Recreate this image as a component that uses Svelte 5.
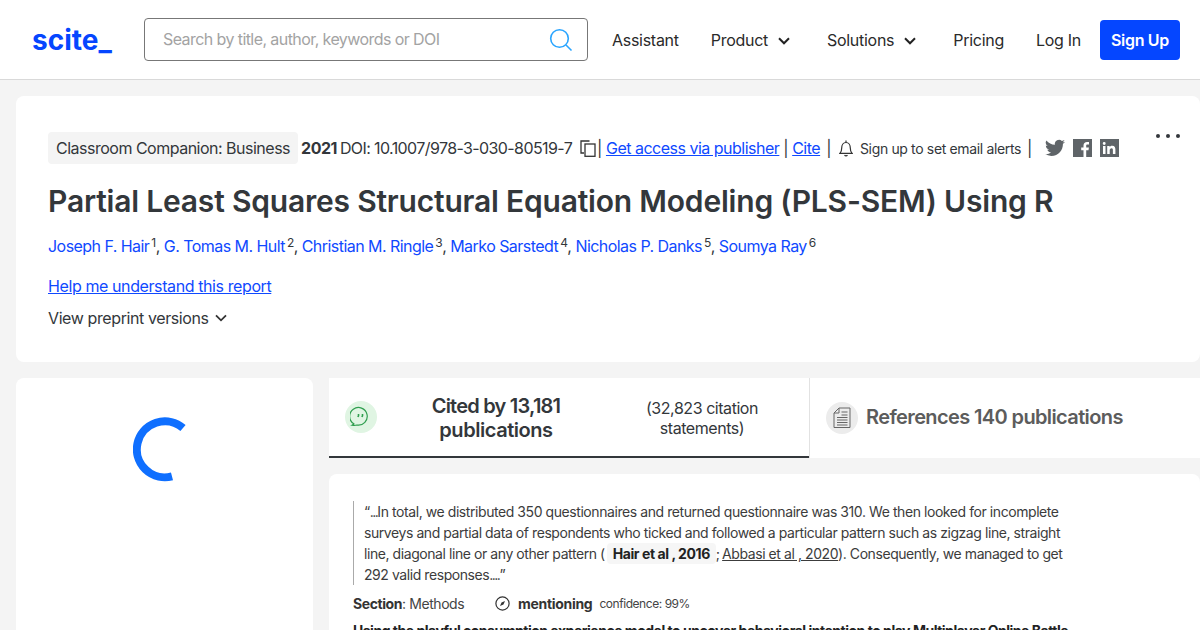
<script>
  const authors = [
    { name: 'Joseph F. Hair', n: 1 },
    { name: 'G. Tomas M. Hult', n: 2 },
    { name: 'Christian M. Ringle', n: 3 },
    { name: 'Marko Sarstedt', n: 4 },
    { name: 'Nicholas P. Danks', n: 5 },
    { name: 'Soumya Ray', n: 6 }
  ];
</script>

<header class="topbar">
  <div class="logo">scite_</div>
  <div class="search">
    <span class="placeholder">Search by title, author, keywords or DOI</span>
    <svg width="24" height="24" viewBox="0 0 24 24" fill="none" stroke="#2aa5ff" stroke-width="1.6">
      <circle cx="10.5" cy="10.5" r="8.8" />
      <path d="M17 17l5.5 5.5" />
    </svg>
  </div>
  <nav>
    <span>Assistant</span>
    <span class="drop">Product
      <svg width="12" height="8" viewBox="0 0 12 8" fill="none" stroke="#222" stroke-width="2"><path d="M1 1.3l5 5 5-5" /></svg>
    </span>
    <span class="drop">Solutions
      <svg width="12" height="8" viewBox="0 0 12 8" fill="none" stroke="#222" stroke-width="2"><path d="M1 1.3l5 5 5-5" /></svg>
    </span>
    <span>Pricing</span>
    <span>Log In</span>
    <button class="signup">Sign Up</button>
  </nav>
</header>

<main>
  <section class="card report">
    <div class="dots"><i></i><i></i><i></i></div>
    <div class="meta">
      <span class="chip">Classroom Companion: Business</span>
      <b class="year">2021</b>
      <span class="doi">DOI: 10.1007/978-3-030-80519-7</span>
      <svg class="copy" width="16" height="17" viewBox="0 0 16 17" fill="none" stroke="#333" stroke-width="1.3">
        <path d="M9.5 1H1v12h3" />
        <rect x="5" y="4" width="10" height="12.3" />
      </svg>
      <span class="sep first">|</span>
      <a href="#top">Get access via publisher</a>
      <span class="sep">|</span>
      <a href="#top">Cite</a>
      <span class="sep wide">|</span>
      <svg class="bell" width="14" height="17" viewBox="0 0 14 17" fill="none" stroke="#333" stroke-width="1.2">
        <path d="M1 13.3c1.4-1.3 1.7-2.6 1.7-5.3 0-3 1.7-5.5 4.3-5.5s4.3 2.5 4.3 5.5c0 2.7.3 4 1.7 5.3z" />
        <path d="M5.5 15.2c.8.9 2.2.9 3 0M7 .6v1.8" />
      </svg>
      <span class="alerts">Sign up to set email alerts</span>
      <span class="sep wide2">|</span>
      <svg class="social" width="20" height="18" viewBox="0 0 24 20" fill="#5f6468">
        <path d="M24 2.4a9.8 9.8 0 0 1-2.8.8 4.9 4.9 0 0 0 2.2-2.7 9.8 9.8 0 0 1-3.1 1.2A4.9 4.9 0 0 0 11.9 6.1 14 14 0 0 1 1.7.9a4.9 4.9 0 0 0 1.5 6.6 4.9 4.9 0 0 1-2.2-.6c0 2.4 1.7 4.4 3.9 4.9a4.9 4.9 0 0 1-2.2.1 4.9 4.9 0 0 0 4.6 3.4A9.9 9.9 0 0 1 0 17.3 14 14 0 0 0 7.5 19.5c9.1 0 14.3-7.7 14-14.6A10 10 0 0 0 24 2.4z" />
      </svg>
      <svg class="social" width="19" height="18" viewBox="0 0 19 18">
        <rect width="19" height="18" fill="#5f6468" />
        <path fill="#fff" d="M13.2 18v-6.8h2.3l.4-2.7h-2.7V6.8c0-.8.3-1.3 1.4-1.3H16V3.1c-.3 0-1.1-.1-2-.1-2.1 0-3.5 1.3-3.5 3.5v2H8.2v2.7h2.3V18z" />
      </svg>
      <svg class="social" width="19" height="18" viewBox="0 0 19 18">
        <rect width="19" height="18" fill="#5f6468" />
        <path fill="#fff" d="M3 7h2.5v8H3zM4.2 3a1.4 1.4 0 1 1 0 2.9 1.4 1.4 0 0 1 0-2.9zM7.2 7h2.4v1.1c.4-.7 1.3-1.3 2.6-1.3 2.7 0 3.2 1.7 3.2 4V15h-2.5v-3.700c0-.9 0-2.100-1.300-2.100s-1.900 1-1.900 2.100V15H7.200z" />
      </svg>
    </div>
    <h1>Partial Least Squares Structural Equation Modeling (PLS-SEM) Using R</h1>
    <div class="authors">
      {#each authors as a, i}
        <a href="#top" class="plain">{a.name}</a><sup>{a.n}</sup>{#if i < authors.length - 1}<span class="comma">,</span>{/if}
      {/each}
    </div>
    <a class="help" href="#top">Help me understand this report</a>
    <div class="preprint">View preprint versions
      <svg width="12" height="8" viewBox="0 0 12 8" fill="none" stroke="#333" stroke-width="1.8"><path d="M1 1.3l5 5 5-5" /></svg>
    </div>
  </section>

  <div class="columns">
    <aside class="card sidebar">
      <svg width="64" height="66" viewBox="0 0 64 66" fill="none" stroke="#0f6fff" stroke-width="8">
        <path d="M50 11A28 28 0 1 0 39 59.4" />
      </svg>
    </aside>

    <div class="results">
      <div class="tabs">
        <div class="tab active">
          <span class="circle green">
            <svg width="22" height="22" viewBox="0 0 22 22" fill="none" stroke="#2f9e4f" stroke-width="1.2">
              <path d="M3.8 17.8A8.8 8.8 0 1 1 7 19c-1.3.4-3 .5-5 .2.8-.4 1.4-.8 1.8-1.4z" />
              <path stroke-width="1.6" d="M8.5 8v1.8l-.6 1.2M12.5 8v1.8l-.6 1.2" />
            </svg>
          </span>
          <div class="count">Cited by 13,181<br /><span class="pubs">publications</span></div>
          <div class="statements">(32,823 citation<br />statements)</div>
        </div>
        <div class="tab refs">
          <span class="circle grey">
            <svg width="18" height="22" viewBox="0 0 18 22" fill="none" stroke="#666" stroke-width="1">
              <path d="M6 1h11v19.5H1V6z" />
              <path d="M6 1v5H1" />
              <path d="M8.5 5h6M8.5 8h6M4 10.5h10.5M4 13h10.5M4 15.5h10.5M4 18h10.5" />
            </svg>
          </span>
          <span class="refs-label">References 140 publications</span>
        </div>
      </div>

      <article class="card statement">
        <blockquote>
          “<span class="tight">...</span>In total, we distributed 350 questionnaires and returned questionnaire was 310. We then looked for incomplete<br />
          surveys and partial data of respondents who ticked and followed a particular pattern such as zigzag line, straight<br />
          line, diagonal line or any other pattern (<span class="cite">Hair et al , 2016</span>; <u>Abbasi et al , 2020</u>). Consequently, we managed to get<br />
          292 valid responses<span class="tight">....</span>”
        </blockquote>
        <div class="tally">
          <span class="section"><b>Section</b>: Methods</span>
          <svg width="15" height="15" viewBox="0 0 15 15" fill="none" stroke="#333" stroke-width="1.2">
            <circle cx="7.5" cy="7.5" r="6.6" />
            <path d="M5 10l1.5-3.5L10 5 8.5 8.5z" fill="#333" stroke="none" />
          </svg>
          <b class="kind">mentioning</b>
          <span class="confidence">confidence: 99%</span>
        </div>
        <div class="source">Using the playful consumption experience model to uncover behavioral intention to play Multiplayer Online Battle</div>
      </article>
    </div>
  </div>
</main>

<style>
  :global(body) {
    margin: 0;
    background: #f4f4f4;
    font-family: Inter, "Liberation Sans", sans-serif;
    color: #33373b;
    height: 630px;
    overflow: hidden;
  }

  .topbar {
    height: 79px;
    background: #fff;
    border-bottom: 1px solid #d9d9d9;
    display: flex;
    align-items: center;
    padding-left: 32px;
    padding-right: 20px;
  }

  .logo {
    flex: none;
    width: 112px;
    font-size: 28px;
    font-weight: 700;
    color: #0546ff;
    line-height: 32px;
  }

  .search {
    flex: none;
    width: 444px;
    height: 43px;
    box-sizing: border-box;
    border: 1px solid #777;
    border-radius: 4px;
    display: flex;
    align-items: center;
    justify-content: space-between;
    padding: 0 14px 0 18px;
  }

  .placeholder {
    font-size: 16px;
    letter-spacing: -0.58px;
    color: #a3a3a3;
    margin-top: -2px;
  }

  nav {
    flex: none;
    margin-left: 24px;
    display: flex;
    align-items: center;
    gap: 32px;
    font-size: 16px;
    letter-spacing: -0.28px;
    color: #2a2a2a;
    white-space: nowrap;
  }

  .drop {
    display: flex;
    align-items: center;
    gap: 10px;
  }

  .drop svg {
    margin: 2px 5px 0 0;
  }

  .signup {
    margin-left: -13px;
    width: 80px;
    height: 40px;
    border: none;
    border-radius: 4px;
    background: #0546ff;
    color: #fff;
    font: 600 16px Inter, "Liberation Sans", sans-serif;
    letter-spacing: -0.3px;
  }

  main {
    padding: 16px 0 0 16px;
  }

  .card {
    background: #fff;
    border-radius: 8px;
  }

  .report {
    position: relative;
    height: 266px;
    box-sizing: border-box;
    padding: 36px 32px 0;
  }

  .dots {
    position: absolute;
    top: 38px;
    right: 20px;
    display: flex;
    gap: 6px;
  }

  .dots i {
    width: 4px;
    height: 4px;
    border-radius: 50%;
    background: #33373b;
  }

  .meta {
    display: flex;
    align-items: center;
    white-space: nowrap;
    font-size: 16px;
    letter-spacing: -0.5px;
    height: 32px;
  }

  .chip {
    background: #f4f4f4;
    border-radius: 4px;
    padding: 0 8px;
    line-height: 32px;
  }

  .year {
    margin-left: 3px;
  }

  .doi {
    margin-left: 3px;
    letter-spacing: -0.6px;
  }

  .copy {
    margin-left: 8px;
  }

  .sep {
    margin: 0 4px;
  }

  .sep.first {
    margin: 0 4px 0 1px;
  }

  .sep.wide {
    margin: 0 8px 0 6px;
  }

  .sep.wide2 {
    margin: 0 13px 0 6px;
  }

  .bell {
    margin-right: 7px;
  }

  .alerts {
    font-size: 14px;
    letter-spacing: -0.35px;
  }

  .social {
    margin-right: 8px;
  }

  a {
    color: #0f49ff;
  }

  h1 {
    margin: 16px 0 0;
    font-size: 30px;
    line-height: 42px;
    font-weight: 600;
    letter-spacing: -0.2px;
    white-space: nowrap;
  }

  .authors {
    margin-top: 12px;
    font-size: 16px;
    letter-spacing: -0.55px;
    line-height: 24px;
    white-space: nowrap;
    display: flex;
    align-items: baseline;
  }

  .plain {
    text-decoration: none;
  }

  sup {
    font-size: 12px;
    line-height: 0;
    margin-left: 2px;
    position: relative;
    top: -5px;
  }

  .comma {
    margin-right: 4px;
  }

  .help {
    display: block;
    margin-top: 16px;
    font-size: 16px;
    letter-spacing: -0.4px;
    line-height: 24px;
  }

  .preprint {
    margin-top: 8px;
    font-size: 16px;
    letter-spacing: -0.4px;
    line-height: 24px;
    display: flex;
    align-items: center;
    gap: 6px;
  }

  .columns {
    margin-top: 16px;
    display: flex;
    gap: 16px;
    align-items: flex-start;
  }

  .sidebar {
    width: 297px;
    flex: none;
    height: 400px;
    box-sizing: border-box;
    padding-top: 39px;
    display: flex;
    justify-content: center;
    align-items: flex-start;
  }

  .results {
    flex: 1;
    min-width: 0;
  }

  .tabs {
    display: flex;
    height: 80px;
    background: #fff;
  }

  .tab {
    box-sizing: border-box;
    display: flex;
    align-items: center;
  }

  .tab.active {
    width: 480px;
    border-bottom: 2px solid #33373b;
    padding-left: 16px;
    border-top-left-radius: 8px;
  }

  .circle {
    width: 32px;
    height: 32px;
    border-radius: 50%;
    flex: none;
    display: flex;
    align-items: center;
    justify-content: center;
  }

  .green {
    background: #e0f5e3;
  }

  .grey {
    background: #ececec;
  }

  .count {
    width: 238px;
    text-align: center;
    font-size: 20px;
    line-height: 24px;
    font-weight: 600;
    letter-spacing: -0.77px;
    padding-top: 2px;
  }

  .pubs {
    letter-spacing: -0.45px;
  }

  .statements {
    width: 162px;
    margin-left: 6px;
    text-align: center;
    font-size: 16px;
    line-height: 20px;
    letter-spacing: -0.45px;
    padding-top: 2px;
  }

  .tab.refs {
    flex: 1;
    border-left: 1px solid #e2e2e2;
    padding-left: 16px;
    gap: 8px;
    font-size: 20px;
    font-weight: 600;
    letter-spacing: -0.62px;
    color: #5c5c5c;
    height: 80px;
  }

  .refs-label {
    margin-top: -2px;
  }

  .statement {
    margin-top: 16px;
    height: 300px;
    box-sizing: border-box;
    padding: 27px 24px 0;
    font-size: 14px;
    white-space: nowrap;
  }

  blockquote {
    margin: 0;
    border-left: 1px solid #aaa;
    padding-left: 10px;
    line-height: 21px;
    letter-spacing: -0.43px;
    color: #3c3c3c;
  }

  .tight {
    letter-spacing: -1.5px;
  }

  .cite {
    display: inline-block;
    margin: 0 0 0 2px;
    padding: 0 6px;
    background: #f6f6f6;
    border-radius: 4px;
    font-weight: 700;
    color: #222;
  }

  blockquote u {
    margin-left: -1px;
  }

  .tally {
    margin-top: 8px;
    display: flex;
    align-items: center;
    line-height: 21px;
    color: #444;
    letter-spacing: -0.3px;
  }

  .section {
    width: 142px;
    letter-spacing: -0.42px;
  }

  .section b {
    color: #333;
  }

  .kind {
    margin: 0 7px 0 8px;
    color: #333;
  }

  .confidence {
    font-size: 12px;
    letter-spacing: -0.45px;
  }

  .source {
    margin-top: 8px;
    font-weight: 700;
    color: #222;
    letter-spacing: -0.49px;
  }
</style>
